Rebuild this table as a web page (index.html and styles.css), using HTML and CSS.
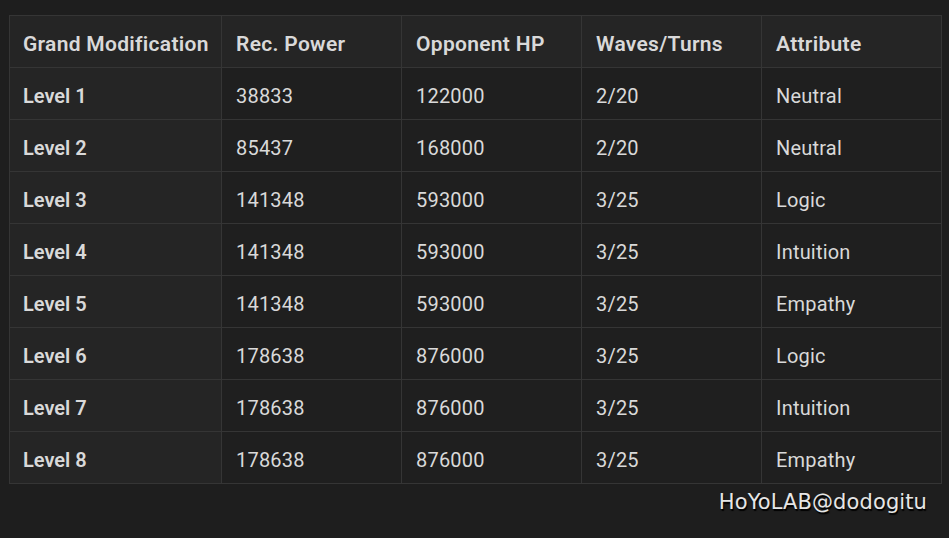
FILE: index.html
```html
<!DOCTYPE html>
<html>
<head>
<meta charset="utf-8">
<link rel="stylesheet" href="styles.css">
</head>
<body>
<div class="wrap">
<table class="grid">
<thead>
<tr><th class="c1">Grand Modification</th><th class="c2">Rec. Power</th><th class="c3">Opponent HP</th><th class="c4">Waves/Turns</th><th class="c5">Attribute</th></tr>
</thead>
<tbody>
<tr><th>Level 1</th><td>38833</td><td>122000</td><td>2/20</td><td>Neutral</td></tr>
<tr><th>Level 2</th><td>85437</td><td>168000</td><td>2/20</td><td>Neutral</td></tr>
<tr><th>Level 3</th><td>141348</td><td>593000</td><td>3/25</td><td>Logic</td></tr>
<tr><th>Level 4</th><td>141348</td><td>593000</td><td>3/25</td><td>Intuition</td></tr>
<tr><th>Level 5</th><td>141348</td><td>593000</td><td>3/25</td><td>Empathy</td></tr>
<tr><th>Level 6</th><td>178638</td><td>876000</td><td>3/25</td><td>Logic</td></tr>
<tr><th>Level 7</th><td>178638</td><td>876000</td><td>3/25</td><td>Intuition</td></tr>
<tr><th>Level 8</th><td>178638</td><td>876000</td><td>3/25</td><td>Empathy</td></tr>
</tbody>
</table>
<div class="mark">HoYoLAB@dodogitu</div>
</div>
</body>
</html>
```
FILE: styles.css
```css
html, body { margin: 0; padding: 0; background: #1e1e1e; }
body { width: 949px; height: 538px; overflow: hidden; }
.wrap { padding: 15px 0 0 9px; }
.grid {
  border-collapse: collapse;
  table-layout: fixed;
  width: 933px;
  font-family: Roboto, "Liberation Sans", sans-serif;
  font-size: 20px;
  color: #d9d9d9;
}
.grid th, .grid td {
  border: 1px solid #353535;
  height: 52px;
  padding: 4px 0 0 13px;
  text-align: left;
  box-sizing: border-box;
}
.grid td { background: #1f1f1f; font-weight: 400; padding-left: 14px; letter-spacing: 0.2px; }
.grid th { background: #252525; font-weight: 600; }
.grid thead th { padding-left: 14px; font-size: 21px; letter-spacing: 0.3px; }
.grid thead th.c1 { padding-left: 13px; }
.c1 { width: 212px; }
.c2, .c3, .c4, .c5 { width: 180px; }
.mark {
  font-family: "DejaVu Sans", sans-serif;
  font-size: 21px;
  color: #e6e6e6;
  text-shadow: 1px 2px 1px #000;
  text-align: right;
  width: 918px;
  margin-top: 6px;
  letter-spacing: 0.1px;
}
```
